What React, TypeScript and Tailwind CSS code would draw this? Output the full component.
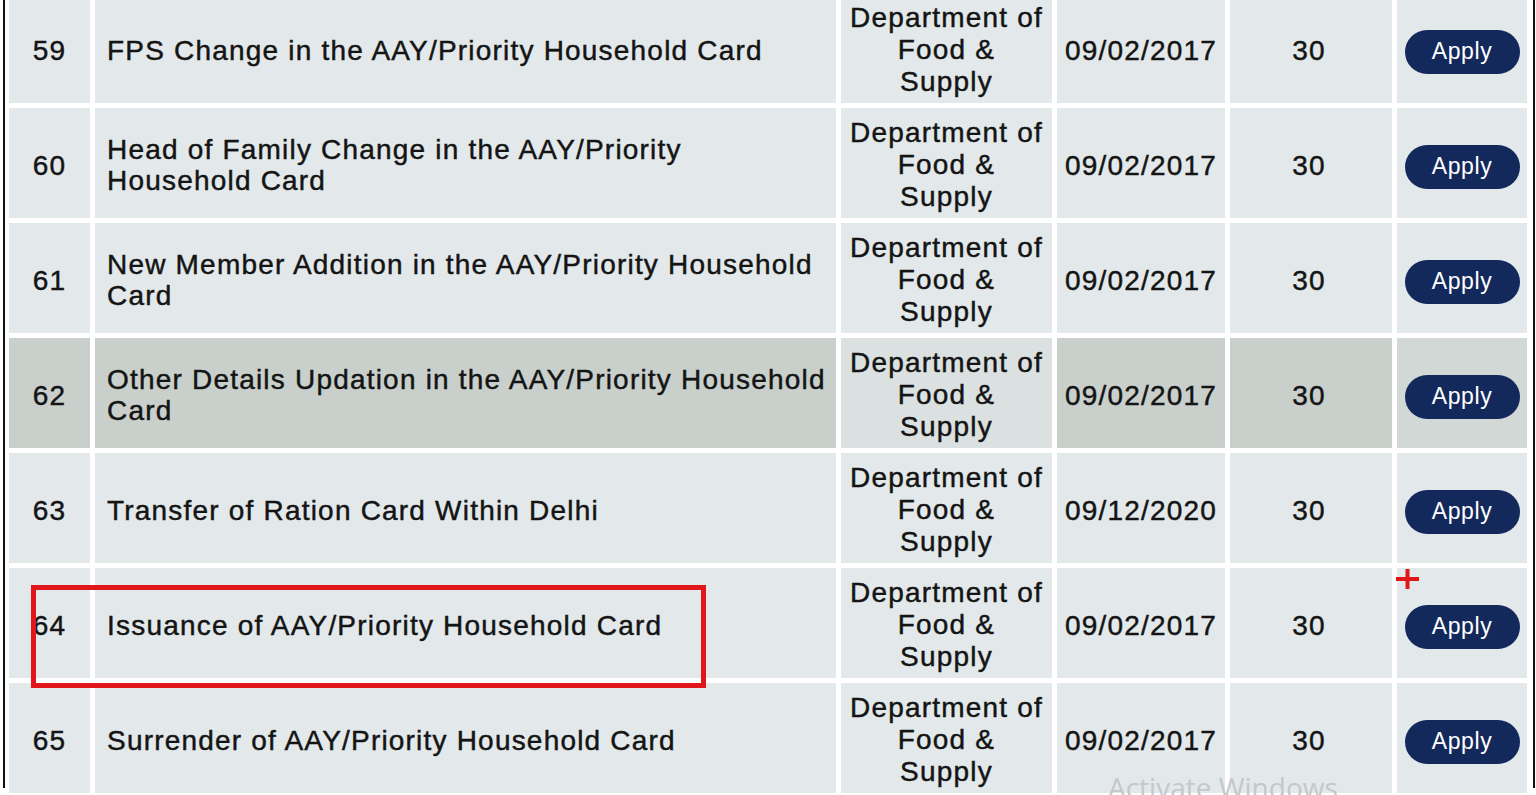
import React from "react";

interface ServiceRow {
  no: string;
  name: string[];
  date: string;
  days: string;
  highlight?: boolean;
}

const ROWS: ServiceRow[] = [
  { no: "59", name: ["FPS Change in the AAY/Priority Household Card"], date: "09/02/2017", days: "30" },
  { no: "60", name: ["Head of Family Change in the AAY/Priority", "Household Card"], date: "09/02/2017", days: "30" },
  { no: "61", name: ["New Member Addition in the AAY/Priority Household", "Card"], date: "09/02/2017", days: "30" },
  { no: "62", name: ["Other Details Updation in the AAY/Priority Household", "Card"], date: "09/02/2017", days: "30", highlight: true },
  { no: "63", name: ["Transfer of Ration Card Within Delhi"], date: "09/12/2020", days: "30" },
  { no: "64", name: ["Issuance of AAY/Priority Household Card"], date: "09/02/2017", days: "30" },
  { no: "65", name: ["Surrender of AAY/Priority Household Card"], date: "09/02/2017", days: "30" },
];

const Row = ({ row }: { row: ServiceRow }) => {
  const cell = row.highlight ? "bg-[#c9d0cc]" : "bg-[#e3e9ea]";
  const deptCell = row.highlight ? "bg-[#dbe1e1]" : "bg-[#e3e9ea]";
  const btnCell = row.highlight ? "bg-[#d2d8d5]" : "bg-[#e3e9ea]";
  return (
    <>
      <div className={`${cell} h-[110px] pt-[4px] flex items-center justify-center`}>{row.no}</div>
      <div className={`${cell} h-[110px] pt-[4px] flex flex-col justify-center pl-[12px]`}>
        {row.name.map((line) => (
          <span key={line} className="whitespace-nowrap">{line}</span>
        ))}
      </div>
      <div className={`${deptCell} h-[110px] pt-[4px] flex flex-col items-center justify-center leading-[32px]`}>
        <span>Department of</span>
        <span>Food &amp;</span>
        <span>Supply</span>
      </div>
      <div className={`${cell} h-[110px] pt-[4px] flex items-center justify-center`}>{row.date}</div>
      <div className={`${cell} h-[110px] pt-[4px] flex items-center justify-center pr-[4px]`}>{row.days}</div>
      <div className={`${btnCell} h-[110px] flex items-center justify-center`}>
        <button className="mt-[7px] w-[115px] h-[44px] rounded-full bg-[#13295b] text-white text-[23px] tracking-[0.6px] leading-none [-webkit-text-stroke:0px]">
          Apply
        </button>
      </div>
    </>
  );
};

export default function App() {
  return (
    <div className="relative w-[1536px] h-[795px] overflow-hidden bg-white font-['Liberation_Sans',Arial,sans-serif] text-[#141414] text-[28px] tracking-[1.2px] leading-[31px] [-webkit-text-stroke:0.45px_#141414]">
      <div className="ml-[3px] w-[1532px] h-[795px] border-x-2 border-[#111]">
        <div className="-mt-[7px] pl-[4px] grid grid-cols-[81px_741px_211px_168px_162px_130px] gap-[5px]">
          {ROWS.map((row) => (
            <Row key={row.no} row={row} />
          ))}
        </div>
      </div>

      {/* annotation drawn over the screenshot */}
      <div className="absolute left-[31px] top-[585px] w-[675px] h-[103px] border-[5px] border-[#e0161b]" />
      <svg className="absolute left-[1396px] top-[569px]" width="23" height="20" viewBox="0 0 23 20">
        <rect x="0" y="8" width="23" height="4" fill="#e0161b" />
        <rect x="9.5" y="0" width="4" height="20" fill="#e0161b" />
      </svg>

      <div className="absolute left-[1108px] top-[772px] font-['Open_Sans',sans-serif] text-[28px] tracking-normal text-[#c4c8ca] whitespace-nowrap [-webkit-text-stroke:0px]">
        Activate Windows
      </div>
    </div>
  );
}
